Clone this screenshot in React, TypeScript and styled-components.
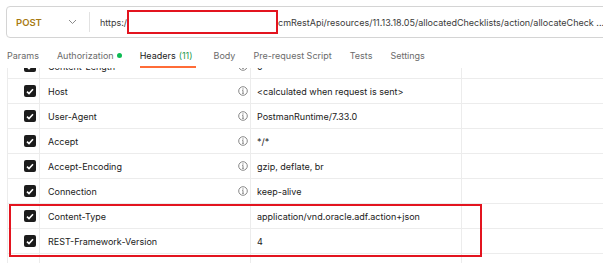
import styled, { createGlobalStyle } from 'styled-components';

const GlobalStyle = createGlobalStyle`
  html, body {
    margin: 0;
    padding: 0;
    background: #ffffff;
    overflow: hidden;
  }
  body {
    font-family: Inter, "Noto Sans", "Liberation Sans", sans-serif;
    color: #212121;
  }
`;

type Header = { key: string; value: string; info?: boolean };

const headers: Header[] = [
  { key: 'Content-Length', value: '0', info: true },
  { key: 'Host', value: '<calculated when request is sent>', info: true },
  { key: 'User-Agent', value: 'PostmanRuntime/7.33.0', info: true },
  { key: 'Accept', value: '*/*', info: true },
  { key: 'Accept-Encoding', value: 'gzip, deflate, br', info: true },
  { key: 'Connection', value: 'keep-alive', info: true },
  { key: 'Content-Type', value: 'application/vnd.oracle.adf.action+json' },
  { key: 'REST-Framework-Version', value: '4' },
];

const tabs = ['Params', 'Authorization', 'Headers', 'Body', 'Pre-request Script', 'Tests', 'Settings'];

export default function App() {
  return (
    <Page>
      <GlobalStyle />
      <UrlBar>
        <MethodSelect>
          <Method>POST</Method>
          <svg width="9" height="6" viewBox="0 0 9 6">
            <path d="M1 1l3.5 3.5L8 1" fill="none" stroke="#8a8a8a" strokeWidth="1" />
          </svg>
        </MethodSelect>
        <UrlText>
          https:/
          <Redacted />
          cmRestApi/resources/11.13.18.05/allocatedChecklists/action/allocateCheck ...
        </UrlText>
      </UrlBar>

      <TabBar>
        {tabs.map((t) => (
          <Tab key={t} $active={t === 'Headers'}>
            {t}
            {t === 'Authorization' && <Dot />}
            {t === 'Headers' && <Count>(11)</Count>}
          </Tab>
        ))}
      </TabBar>

      <TableViewport>
        <TableBody>
          {headers.map((h) => (
            <Row key={h.key}>
              <CheckCell>
                <Check>
                  <svg width="8" height="7" viewBox="0 0 8 7">
                    <path d="M1 3.6l2 2L7 1.2" fill="none" stroke="#fff" strokeWidth="1.6" />
                  </svg>
                </Check>
              </CheckCell>
              <KeyCell>
                <span>{h.key}</span>
                {h.info && (
                  <svg width="10" height="10" viewBox="0 0 10 10">
                    <circle cx="5" cy="5" r="4.3" fill="none" stroke="#7a7a7a" strokeWidth="0.9" />
                    <path d="M5 4.4v3M4.2 7.4h1.6M4.2 4.4h0.8" stroke="#7a7a7a" strokeWidth="0.9" fill="none" />
                    <circle cx="5" cy="2.9" r="0.6" fill="#7a7a7a" />
                  </svg>
                )}
              </KeyCell>
              <ValueCell>{h.value}</ValueCell>
              <DescCell />
            </Row>
          ))}
          <Row $placeholder>
            <CheckCell />
            <KeyCell>Key</KeyCell>
            <ValueCell>Value</ValueCell>
            <DescCell>Description</DescCell>
          </Row>
          <Highlight />
        </TableBody>
      </TableViewport>
    </Page>
  );
}

const Page = styled.div`
  width: 603px;
  height: 263px;
  overflow: hidden;
  background: #ffffff;
  display: flex;
  flex-direction: column;
`;

const UrlBar = styled.div`
  margin: 6px 0 0 6px;
  width: 720px;
  height: 30px;
  border: 1px solid #d4d4d4;
  border-radius: 4px;
  display: flex;
  align-items: center;
  flex-shrink: 0;
`;

const MethodSelect = styled.div`
  width: 83px;
  height: 20px;
  display: flex;
  align-items: center;
  justify-content: space-between;
  padding: 0 12px 0 9px;
  box-sizing: border-box;
  border-right: 1px solid #e2e2e2;
`;

const Method = styled.span`
  color: #a87a12;
  font-size: 9.5px;
  font-weight: 600;
`;

const UrlText = styled.div`
  display: flex;
  align-items: center;
  padding-left: 10px;
  font-size: 9px;
  color: #3a3a3a;
  white-space: nowrap;
`;

const Redacted = styled.span`
  display: inline-block;
  width: 151px;
  height: 24px;
  box-sizing: border-box;
  border: 2.5px solid #e3141f;
  background: #ffffff;
`;

const TabBar = styled.div`
  display: flex;
  margin: 7px 0 0 7px;
  flex-shrink: 0;
`;

const Tab = styled.div<{ $active?: boolean }>`
  height: 21px;
  display: flex;
  align-items: center;
  margin-right: 18px;
  padding-right: ${(p) => (p.$active ? '3px' : '0')};
  font-size: 9px;
  color: ${(p) => (p.$active ? '#212121' : '#6b6b6b')};
  border-bottom: 2px solid ${(p) => (p.$active ? '#ff6c37' : 'transparent')};
  white-space: nowrap;
`;

const Dot = styled.span`
  width: 5px;
  height: 5px;
  border-radius: 50%;
  background: #0cbb52;
  margin-left: 3px;
`;

const Count = styled.span`
  color: #1f9a4f;
  margin-left: 3px;
`;

const TableViewport = styled.div`
  flex: 1;
  overflow: hidden;
  margin-left: 7px;
  border-left: 1px solid #ececec;
`;

const TableBody = styled.div`
  position: relative;
  margin-top: -14px;
`;

const Row = styled.div<{ $placeholder?: boolean }>`
  display: grid;
  grid-template-columns: 32px 211px 211px 1fr;
  height: 25px;
  border-bottom: 1px solid #ececec;
  box-sizing: border-box;
  font-size: 9px;
  color: ${(p) => (p.$placeholder ? '#a6a6a6' : '#212121')};
`;

const Cell = styled.div`
  display: flex;
  align-items: center;
  border-right: 1px solid #ececec;
  box-sizing: border-box;
  white-space: nowrap;
  overflow: hidden;
`;

const CheckCell = styled(Cell)`
  justify-content: flex-end;
  padding-right: 3px;
`;

const KeyCell = styled(Cell)`
  justify-content: space-between;
  padding: 0 2px 0 8px;
`;

const ValueCell = styled(Cell)`
  padding-left: 6px;
`;

const DescCell = styled(Cell)`
  padding-left: 6px;
  border-right: none;
`;

const Check = styled.span`
  width: 12px;
  height: 12px;
  border-radius: 2px;
  background: #1c1c1c;
  display: flex;
  align-items: center;
  justify-content: center;
`;

const Highlight = styled.div`
  position: absolute;
  left: 1px;
  top: 150px;
  width: 473px;
  height: 53px;
  border: 2.5px solid #e3141f;
  box-sizing: border-box;
  pointer-events: none;
`;
